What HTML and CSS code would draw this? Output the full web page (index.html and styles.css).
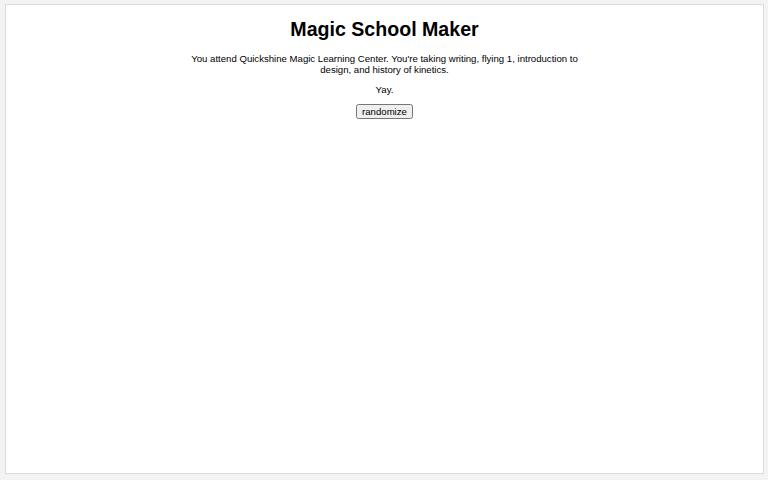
FILE: index.html
```html
<!DOCTYPE html>
<html>
<head>
<title>Magic School Maker</title>
<link rel="stylesheet" href="styles.css">
</head>
<body>
<div id="page">
    <h1 id="title">Magic School Maker</h1>
    <p class="school-text">You attend Quickshine Magic Learning Center. You're taking writing, flying 1, introduction to design, and history of kinetics.</p>
    <p class="cheer">Yay.</p>
    <div>
        <button class="randomize-button" onclick="location.reload();">randomize</button>
    </div>
</div>
</body>
</html>
```

FILE: styles.css
```css
html {
    background-color: #f3f3f3;
}
body {
    margin: 0;
    padding: 4px 4px 4px 5px;
    font-family: "Liberation Sans", Arial, sans-serif;
    font-size: 9.6px;
    color: #000;
}
#page {
    background-color: #fff;
    border: 1px solid #dcdcdc;
    height: 468px;
    text-align: center;
}
#title {
    font-size: 19.6px;
    font-weight: bold;
    margin: 13px 0 0 0;
    line-height: 23px;
}
.school-text {
    max-width: 400px;
    margin: 12px auto 0 auto;
    line-height: 11px;
}
.cheer {
    margin: 9px 0 0 0;
}
.randomize-button {
    font-family: "Liberation Sans", Arial, sans-serif;
    font-size: 9.6px;
    margin-top: 9px;
    padding: 0 4px;
    height: 15px;
}
```
